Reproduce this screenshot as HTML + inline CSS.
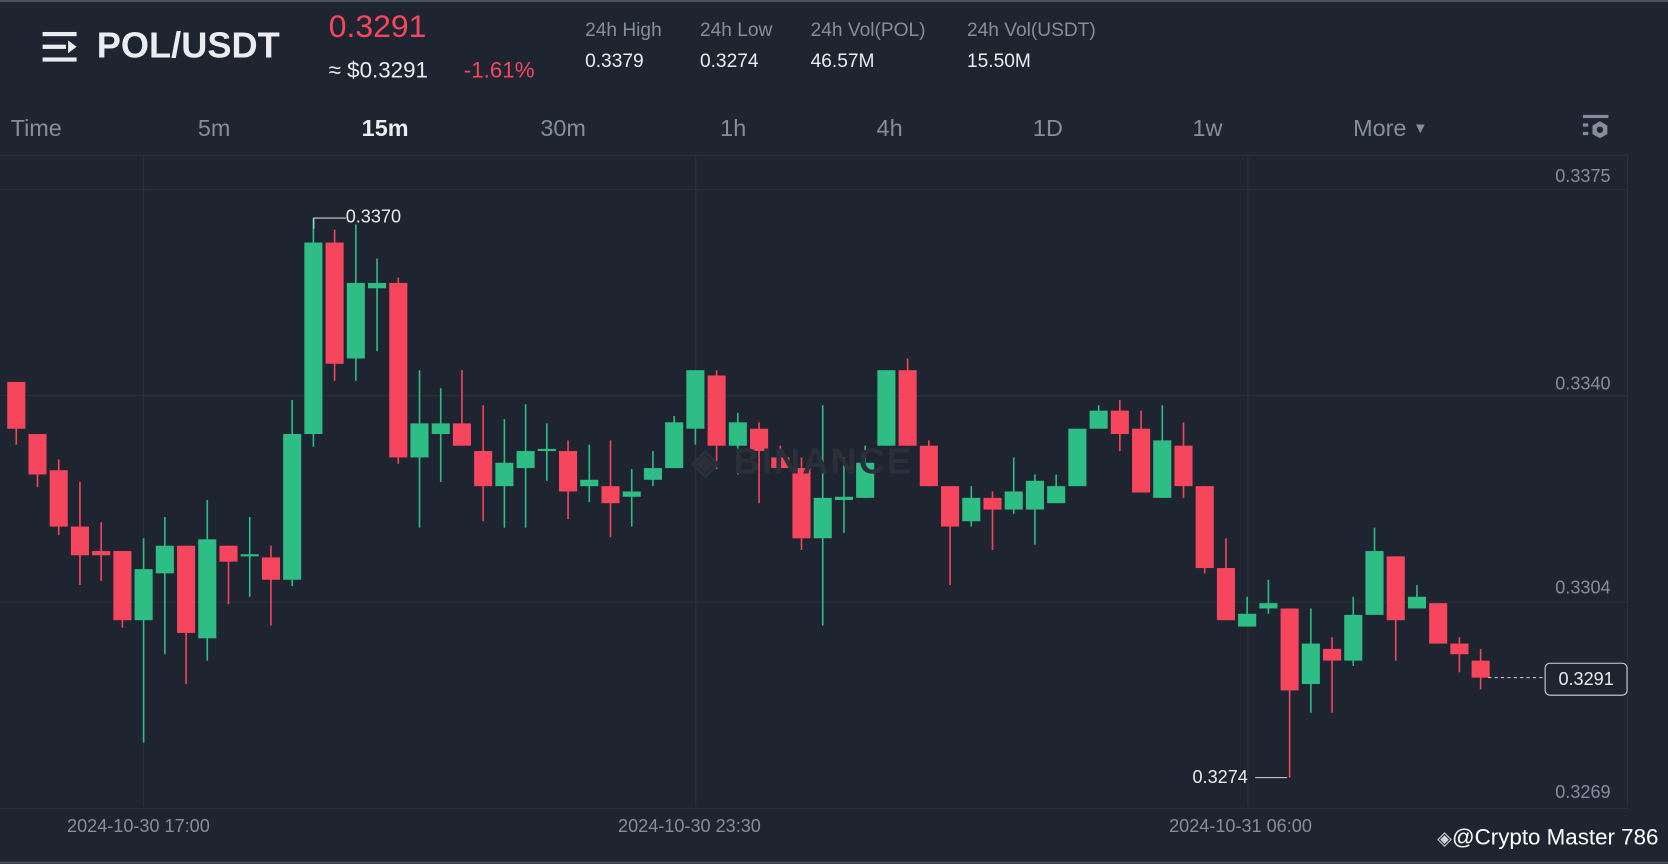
<!DOCTYPE html>
<html><head><meta charset="utf-8">
<style>
html,body{margin:0;padding:0;background:#1f2530;overflow:hidden;width:1668px;height:864px}
#w{position:absolute;left:0;top:0;width:1568px;height:812px;overflow:hidden;transform:scale(1.06378);transform-origin:0 0;font-family:"Liberation Sans",sans-serif;color:#eaecef}
.a{position:absolute;white-space:nowrap}
.g{color:#848e9c}
.tab{position:absolute;top:108px;font-size:22px;color:#848e9c}
</style></head><body>
<div id="w">
<div class="a" style="left:0;top:0;width:1568px;height:2px;background:#4a505a"></div>
<div class="a" style="left:0;top:810px;width:1568px;height:2px;background:#4a505a"></div>
<svg class="a" style="left:40px;top:30px" width="34" height="28" viewBox="0 0 34 28"><rect x="0" y="0" width="32" height="4" fill="#eaecef"/><rect x="0" y="12" width="22" height="4" fill="#eaecef"/><polygon points="24,8 32,14 24,20" fill="#eaecef"/><rect x="0" y="24" width="32" height="4" fill="#eaecef"/></svg>
<div class="a" style="left:91px;top:24px;font-size:34px;font-weight:bold;color:#eaecef">POL/USDT</div>
<div class="a" style="left:309px;top:9px;font-size:30px;color:#f6465d">0.3291</div>
<div class="a" style="left:309px;top:55px;font-size:21px">≈ $0.3291</div>
<div class="a" style="left:436px;top:55px;font-size:21px;color:#f6465d">-1.61%</div>
<div class="a g" style="left:550px;top:18px;font-size:18px">24h High</div>
<div class="a g" style="left:658px;top:18px;font-size:18px">24h Low</div>
<div class="a g" style="left:762px;top:18px;font-size:18px">24h Vol(POL)</div>
<div class="a g" style="left:909px;top:18px;font-size:18px">24h Vol(USDT)</div>
<div class="a" style="left:550px;top:47px;font-size:18px">0.3379</div>
<div class="a" style="left:658px;top:47px;font-size:18px">0.3274</div>
<div class="a" style="left:762px;top:47px;font-size:18px">46.57M</div>
<div class="a" style="left:909px;top:47px;font-size:18px">15.50M</div>
<div class="tab" style="left:10px">Time</div>
<div class="tab" style="left:186px">5m</div>
<div class="tab" style="left:340px;color:#eaecef;font-weight:bold">15m</div>
<div class="tab" style="left:508px">30m</div>
<div class="tab" style="left:677px">1h</div>
<div class="tab" style="left:824px">4h</div>
<div class="tab" style="left:971px">1D</div>
<div class="tab" style="left:1121px">1w</div>
<div class="tab" style="left:1272px">More <span style="font-size:14px;position:relative;top:-3px">▼</span></div>
<svg class="a" style="left:1486px;top:106px" width="30" height="28" viewBox="0 0 30 28"><rect x="2" y="2" width="24" height="3" fill="#848e9c"/><rect x="2" y="10" width="5" height="3" fill="#848e9c"/><rect x="2" y="18" width="5" height="3" fill="#848e9c"/><polygon points="18,8 25,12 25,20 18,24 11,20 11,12" fill="#848e9c"/><circle cx="18" cy="16" r="3" fill="#1f2530"/></svg>
<svg id="c" class="a" style="left:0;top:0" width="1568" height="812" viewBox="0 0 1568 812"></svg>
<div class="a" style="left:650px;top:414px;font-size:34px;font-weight:bold;color:#2a303a;letter-spacing:2px">◈ BINANCE</div>
<div class="a g" style="left:1462px;top:156px;font-size:17px">0.3375</div>
<div class="a g" style="left:1462px;top:351px;font-size:17px">0.3340</div>
<div class="a g" style="left:1462px;top:543px;font-size:17px">0.3304</div>
<div class="a g" style="left:1462px;top:735px;font-size:17px">0.3269</div>
<div class="a g" style="left:63px;top:767px;font-size:17px">2024-10-30 17:00</div>
<div class="a g" style="left:581px;top:767px;font-size:17px">2024-10-30 23:30</div>
<div class="a g" style="left:1099px;top:767px;font-size:17px">2024-10-31 06:00</div>
<div class="a" style="left:325px;top:194px;font-size:17px">0.3370</div>
<div class="a" style="left:1121px;top:721px;font-size:17px">0.3274</div>
<div class="a" style="left:1452px;top:623px;width:76px;height:29px;border:1.5px solid #d0d4da;border-radius:5px;font-size:17px;line-height:29px;text-align:center">0.3291</div>
<div class="a" style="right:9px;top:776px;font-size:21px;color:#fff"><span style="color:#d0d4da;font-size:18px">◈</span>@Crypto Master 786</div>
</div>
<script>
var d=[[0,359,403,359,418],[0,408,446,408,458],[0,442,495,432,503],[0,495,522,453,550],[0,518,522,491,546],[0,518,583,518,590],[1,535,583,506,698],[1,513,539,486,615],[0,513,595,513,643],[1,507,600,470,621],[0,513,528,513,568],[1,521,523,486,561],[0,524,545,513,588],[1,408,545,376,551],[1,228,408,205,420],[0,228,342,216,358],[1,266,337,211,358],[1,266,271,243,330],[0,266,430,261,436],[1,398,430,348,496],[1,398,408,365,453],[0,398,419,348,419],[0,424,457,381,490],[1,435,457,394,496],[1,424,440,380,496],[1,422,424,398,452],[0,424,462,414,488],[1,451,457,418,472],[0,457,473,414,505],[1,462,467,441,495],[1,440,451,424,457],[1,397,440,391,440],[1,348,403,348,418],[0,353,419,348,441],[1,397,419,388,446],[0,403,424,397,473],[0,430,440,419,440],[0,440,506,430,517],[1,468,506,381,588],[1,467,470,430,501],[1,435,468,419,468],[1,348,419,348,419],[0,348,419,337,419],[0,419,457,414,457],[0,457,495,457,550],[1,468,490,457,495],[0,468,479,462,517],[1,462,479,430,483],[1,452,479,446,512],[1,457,473,446,473],[1,403,457,403,457],[1,386,403,381,403],[0,386,408,376,424],[0,403,463,386,463],[1,414,468,381,468],[0,419,457,397,468],[0,457,534,457,539],[0,534,583,506,583],[1,577,589,561,589],[1,567,572,545,577],[0,572,649,572,731],[1,605,643,572,670],[0,610,621,599,670],[1,578,621,561,626],[1,518,578,496,578],[0,523,583,523,621],[1,561,572,550,572],[0,567,605,567,605],[0,605,615,599,632],[0,621,637,610,648]];
var s='<g stroke="#2b313b" stroke-width="1">';
[178,372,566,760].forEach(function(y){s+='<line x1="0" y1="'+y+'" x2="1530" y2="'+y+'"/>'});
[135,654,1173].forEach(function(x){s+='<line x1="'+x+'" y1="146" x2="'+x+'" y2="758"/>'});
s+='<line x1="0" y1="146" x2="1530" y2="146"/><line x1="1530" y1="146" x2="1530" y2="758"/></g>';
d.forEach(function(c,i){var x=135+19.95*(i-6),col=c[0]?'#2ebd85':'#f6465d';var h=Math.max(c[2]-c[1],2);
s+='<line x1="'+x+'" y1="'+c[3]+'" x2="'+x+'" y2="'+c[4]+'" stroke="'+col+'" stroke-width="1.5"/>';
s+='<rect x="'+(x-8.5)+'" y="'+c[1]+'" width="17" height="'+h+'" fill="'+col+'"/>';});
s+='<polyline points="295,215 295,205 325,205" fill="none" stroke="#d0d4da" stroke-width="1"/>';
s+='<polyline points="1180,731 1210,731" fill="none" stroke="#d0d4da" stroke-width="1"/>';
s+='<line x1="1399" y1="637" x2="1450" y2="637" stroke="#d0d4da" stroke-dasharray="3,3"/>';
document.getElementById('c').innerHTML=s;
</script>
</body></html>
